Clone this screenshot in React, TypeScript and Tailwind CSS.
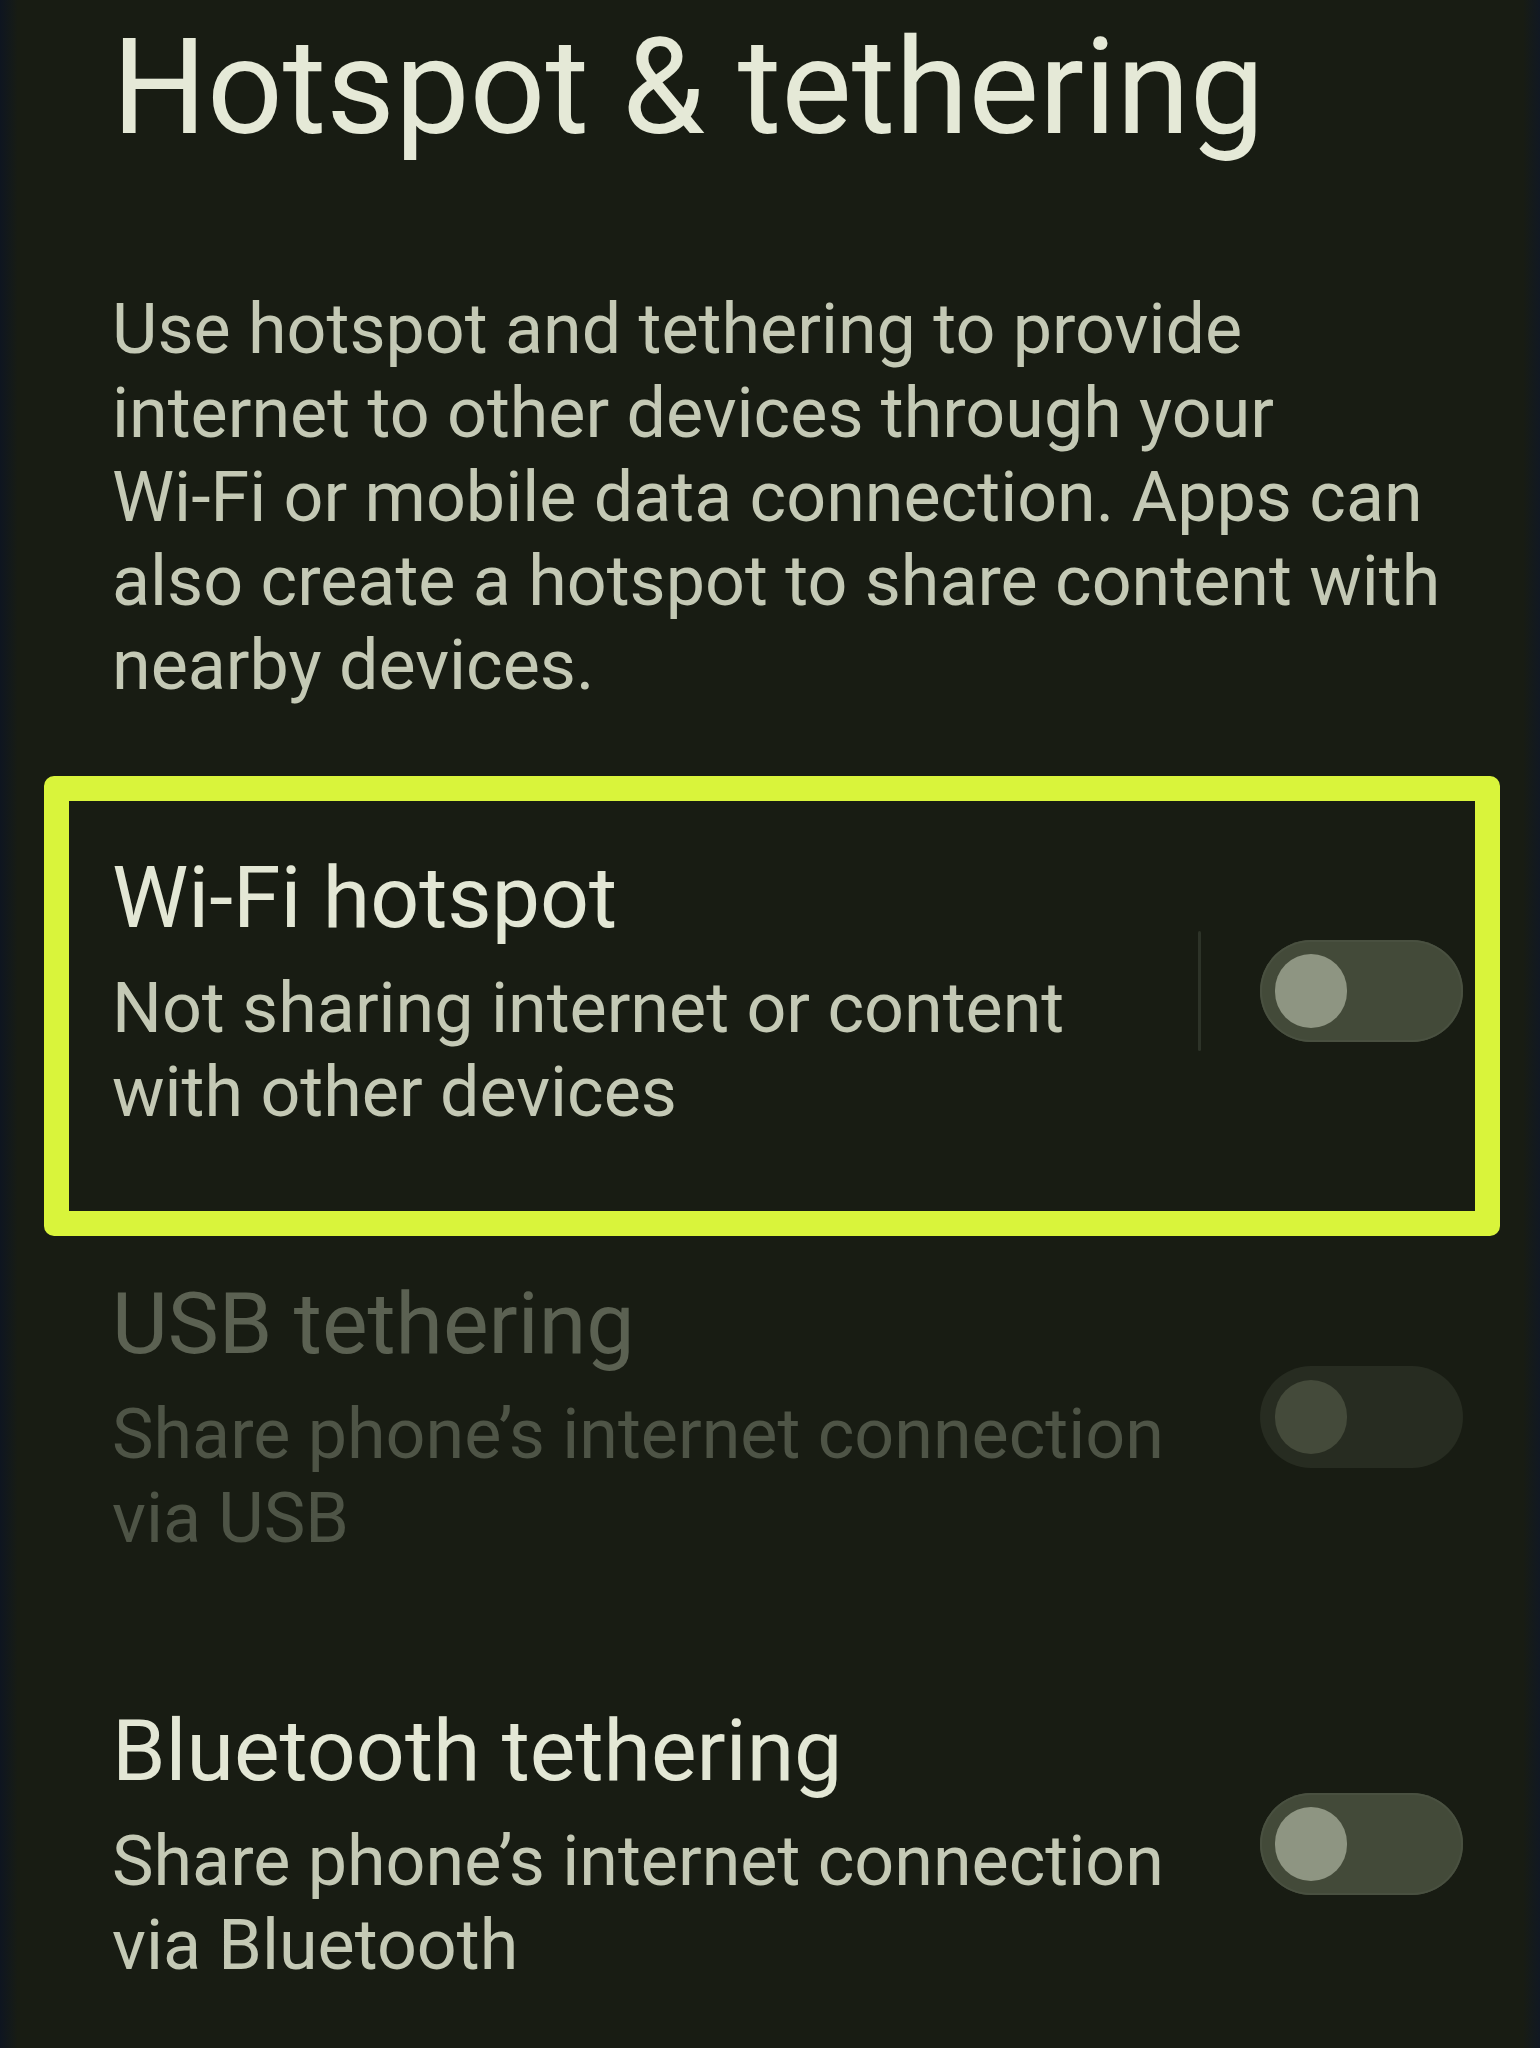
const font = { fontFamily: 'Roboto, "Noto Sans", sans-serif' }

function Toggle({ disabled = false }: { disabled?: boolean }) {
  return (
    <div
      className={`flex h-[102px] w-[203px] shrink-0 items-center rounded-full ${
        disabled ? 'bg-[#272c21]' : 'bg-[#434a39] ring-2 ring-inset ring-[#495040]'
      }`}
    >
      <div
        className={`ml-[15px] h-[74px] w-[72px] rounded-full ${disabled ? 'bg-[#444a3a]' : 'bg-[#8e9582]'}`}
      />
    </div>
  )
}

function Row({
  title,
  lines,
  disabled = false,
  divider = false,
}: {
  title: string
  lines: string[]
  disabled?: boolean
  divider?: boolean
}) {
  return (
    <div className="flex items-center">
      <div className="flex-1">
        <div
          className={`text-[86px] leading-[100px] ${disabled ? 'text-[#5b6152]' : 'text-[#e3e7d5]'}`}
        >
          {title}
        </div>
        <div
          className={`mt-[18px] text-[70px] leading-[84px] ${disabled ? 'text-[#4e5446]' : 'text-[#c4c9b5]'}`}
        >
          {lines.map((l, i) => (
            <div key={i}>{l}</div>
          ))}
        </div>
      </div>
      {divider && <div className="mr-[59px] h-[120px] w-[3px] rounded-full bg-[#2d3328]" />}
      <Toggle disabled={disabled} />
    </div>
  )
}

export default function App() {
  return (
    <div className="flex h-[2048px] w-[1540px] bg-[#181c13]" style={font}>
      {/* bezel edges */}
      <div className="w-[18px] bg-linear-to-r from-[#0e1520] to-[#181c13]" />

      <div className="flex-1 overflow-hidden">
        <h1 className="pl-[94px] pt-[8px] text-[133px] leading-[160px] text-[#e5e9d7]">
          Hotspot &amp; tethering
        </h1>

        <p className="mt-[119px] pl-[94px] text-[70px] leading-[84px] text-[#c4c9b5]">
          Use hotspot and tethering to provide
          <br />
          internet to other devices through your
          <br />
          Wi-Fi or mobile data connection. Apps can
          <br />
          also create a hotspot to share content with
          <br />
          nearby devices.
        </p>

        {/* highlighted row */}
        <div className="ml-[26px] mr-[23px] mt-[69px] rounded-[10px] border-[25px] border-[#d9f43b] pb-[77px] pl-[43px] pr-[12px] pt-[47px]">
          <Row
            title="Wi-Fi hotspot"
            lines={['Not sharing internet or content', 'with other devices']}
            divider
          />
        </div>

        <div className="mt-[38px] pl-[94px] pr-[60px]">
          <Row
            title="USB tethering"
            lines={['Share phone’s internet connection', 'via USB']}
            disabled
          />
        </div>

        <div className="mt-[141px] pl-[94px] pr-[60px]">
          <Row
            title="Bluetooth tethering"
            lines={['Share phone’s internet connection', 'via Bluetooth']}
          />
        </div>
      </div>

      <div className="w-[17px] bg-linear-to-l from-[#111822] to-[#181c13]" />
    </div>
  )
}
